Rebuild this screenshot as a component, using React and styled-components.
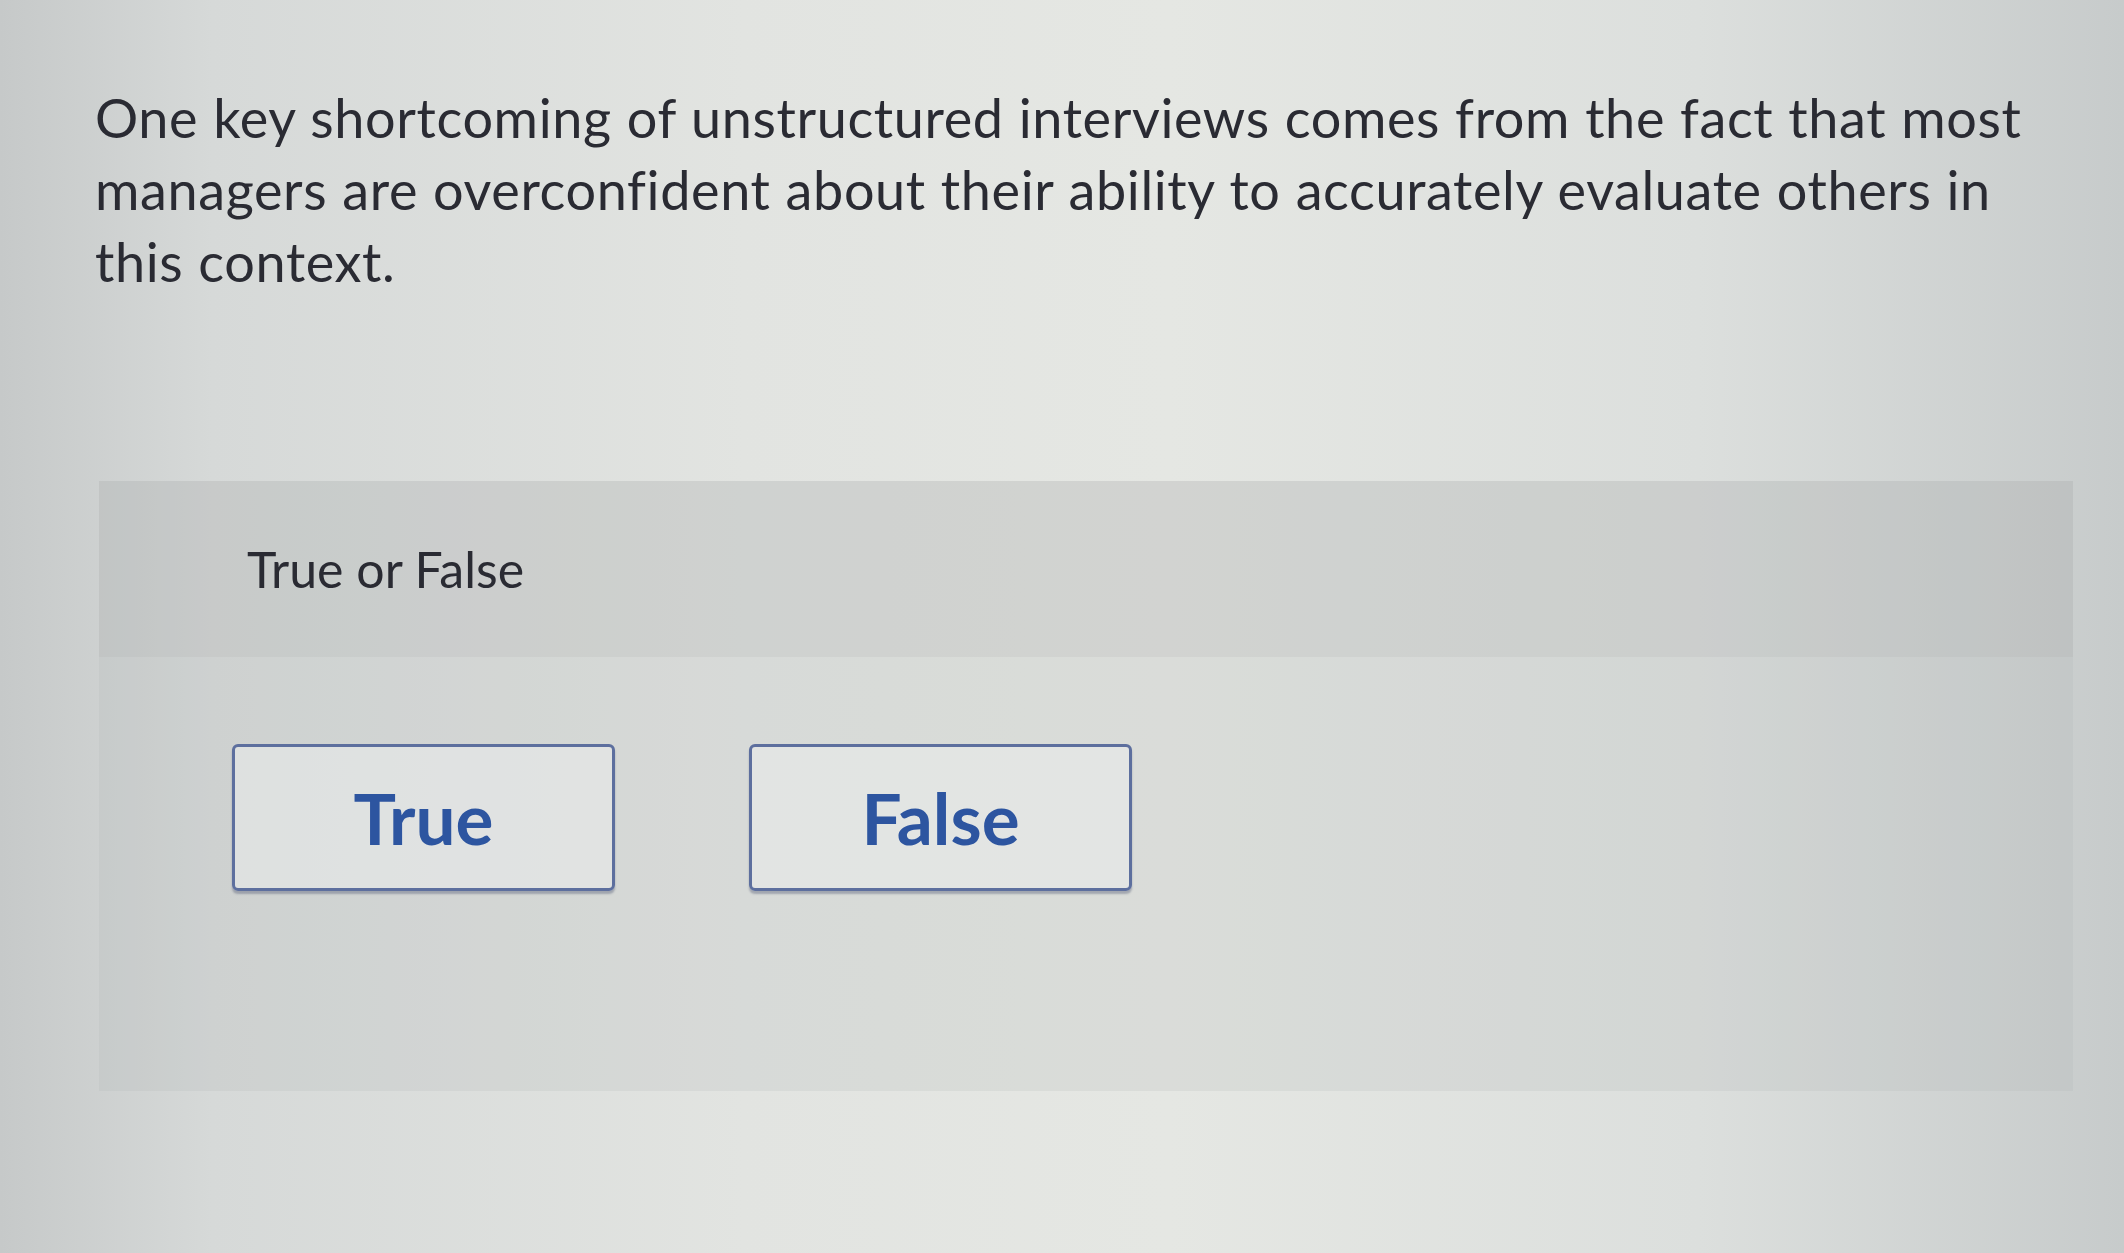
import React from "react";
import styled, { createGlobalStyle } from "styled-components";

const Global = createGlobalStyle`
  html, body { margin: 0; padding: 0; }
  body {
    width: 2124px;
    height: 1253px;
    overflow: hidden;
    font-family: Lato, "Open Sans", sans-serif;
    background: linear-gradient(90deg, #c6c9c9 0%, #d6d9d8 10%, #e2e4e1 35%, #e5e7e3 55%, #dcdfdd 80%, #c7cbcb 100%);
  }
`;

const Page = styled.main`
  box-sizing: border-box;
  width: 2124px;
  height: 1253px;
  padding: 82px 51px 0 95px;
  display: flex;
  flex-direction: column;
`;

const Prompt = styled.p`
  margin: 0;
  font-size: 54px;
  line-height: 72px;
  color: #2a2b33;
  letter-spacing: 0.62px;
  word-spacing: 0.6px;
  max-width: 1940px;
`;

const Panel = styled.section`
  margin-top: 183px;
  margin-left: 4px;
  width: 1974px;
  height: 610px;
  display: flex;
  flex-direction: column;
  background: rgba(176, 180, 180, 0.2);
`;

const PanelHeader = styled.header`
  height: 176px;
  display: flex;
  align-items: center;
  padding-left: 148px;
  background: rgba(166, 170, 170, 0.16);
  font-size: 50px;
  color: #2a2b33;
`;

const Choices = styled.div`
  display: flex;
  gap: 134px;
  padding: 87px 0 0 133px;
`;

const Choice = styled.button`
  box-sizing: border-box;
  width: 383px;
  height: 147px;
  border: 3px solid #5d6f9e;
  border-radius: 6px;
  background: rgba(235, 237, 236, 0.55);
  box-shadow: 0 3px 2px rgba(60, 70, 100, 0.35);
  font-family: Lato, "Open Sans", sans-serif;
  font-weight: 700;
  font-size: 71px;
  color: #2d55a0;
  display: flex;
  align-items: center;
  justify-content: center;
  cursor: pointer;
`;

export default function App() {
  return (
    <>
      <Global />
      <Page>
        <Prompt>
          One key shortcoming of unstructured interviews comes from the fact that most
          managers are overconfident about their ability to accurately evaluate others in
          this context.
        </Prompt>
        <Panel>
          <PanelHeader>True or False</PanelHeader>
          <Choices>
            <Choice>True</Choice>
            <Choice>False</Choice>
          </Choices>
        </Panel>
      </Page>
    </>
  );
}
